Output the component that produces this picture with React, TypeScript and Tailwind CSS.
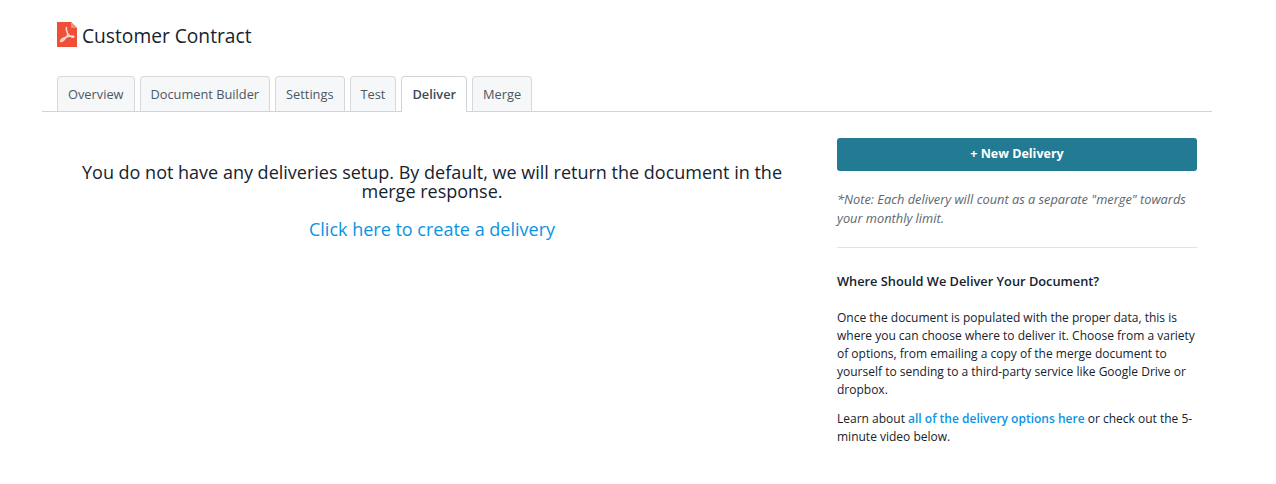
import React from "react";

const tabs = ["Overview", "Document Builder", "Settings", "Test", "Deliver", "Merge"];

const PdfIcon = () => (
	<svg width="20" height="25" viewBox="0 0 20 25" className="block">
		<path d="M0 0H14L20 6V25H0Z" fill="#ef4f37" />
		<path d="M14 0L20 6H14Z" fill="#f58c7c" />
		<path
			d="M9.5 5.5C8.8 7.5 10.5 11 11 12.5C9.5 15 6 19.5 3.5 19.5C3.5 17.5 7.5 15.5 11 14.5C13 14 17 13.5 17 14.8C17 16 13.5 15 11.5 12.5C10 10.5 9 7 9.5 5.5Z"
			fill="none"
			stroke="#fbd5ce"
			strokeWidth="1.5"
			strokeLinejoin="round"
		/>
	</svg>
);

export default function App() {
	return (
		<div className="h-[484px] w-[1276px] overflow-hidden bg-white font-['Open_Sans',sans-serif] text-[#14232f]">
			<div className="ml-[42px] w-[1170px]">
				<div className="flex h-[76px] items-start pl-[15px] pt-[22px]">
					<PdfIcon />
					<h1 className="ml-[5px] text-[19.2px] leading-[28px]">Customer Contract</h1>
				</div>
				<div className="flex h-[36px] gap-[5px] border-b border-[#ced4da] pl-[15px]">
					{tabs.map((tab) => (
						<div
							key={tab}
							className={
								tab === "Deliver"
									? "h-[36px] rounded-t-[4px] border border-b-0 border-[#ced4da] bg-white px-[10px] pt-[7px] text-[12.8px] leading-[20px] font-semibold text-[#3d4b57]"
									: "h-[35px] rounded-t-[4px] border border-b-0 border-[#d5d9de] bg-[#f6f7f8] px-[10px] pt-[7px] text-[12.8px] leading-[20px] text-[#4a5763]"
							}
						>
							{tab}
						</div>
					))}
				</div>
				<div className="flex pt-[26px]">
					<div className="w-[780px] pl-[30px] pr-[30px] pt-[25px] text-center">
						<p className="text-[18px] leading-[19px]">
							You do not have any deliveries setup. By default, we will return the document in the merge response.
						</p>
						<a className="mt-[16px] block text-[18px] leading-[24px] text-[#0994e4]">Click here to create a delivery</a>
					</div>
					<div className="ml-[15px] w-[360px]">
						<button className="block h-[33px] w-full rounded-[3px] bg-[#227a93] text-[12.5px] font-bold text-white">
							+ New Delivery
						</button>
						<p className="mt-[19px] text-[12.8px] leading-[19.2px] text-[#5c6670] italic">
							*Note: Each delivery will count as a separate "merge" towards your monthly limit.
						</p>
						<div className="mt-[19px] border-t border-[#dfe1e3]" />
						<h3 className="mt-[24px] text-[12.8px] leading-[19px] font-semibold">Where Should We Deliver Your Document?</h3>
						<p className="mt-[18px] text-[12px] leading-[18px]">
							Once the document is populated with the proper data, this is where you can choose where to deliver it. Choose from a variety of options, from emailing a copy of the merge document to yourself to sending to a third-party service like Google Drive or dropbox.
						</p>
						<p className="mt-[11px] text-[12px] leading-[18px]">
							Learn about <a className="font-semibold text-[#0994e4]">all of the delivery options here</a> or check out the 5-minute video below.
						</p>
					</div>
				</div>
			</div>
		</div>
	);
}
